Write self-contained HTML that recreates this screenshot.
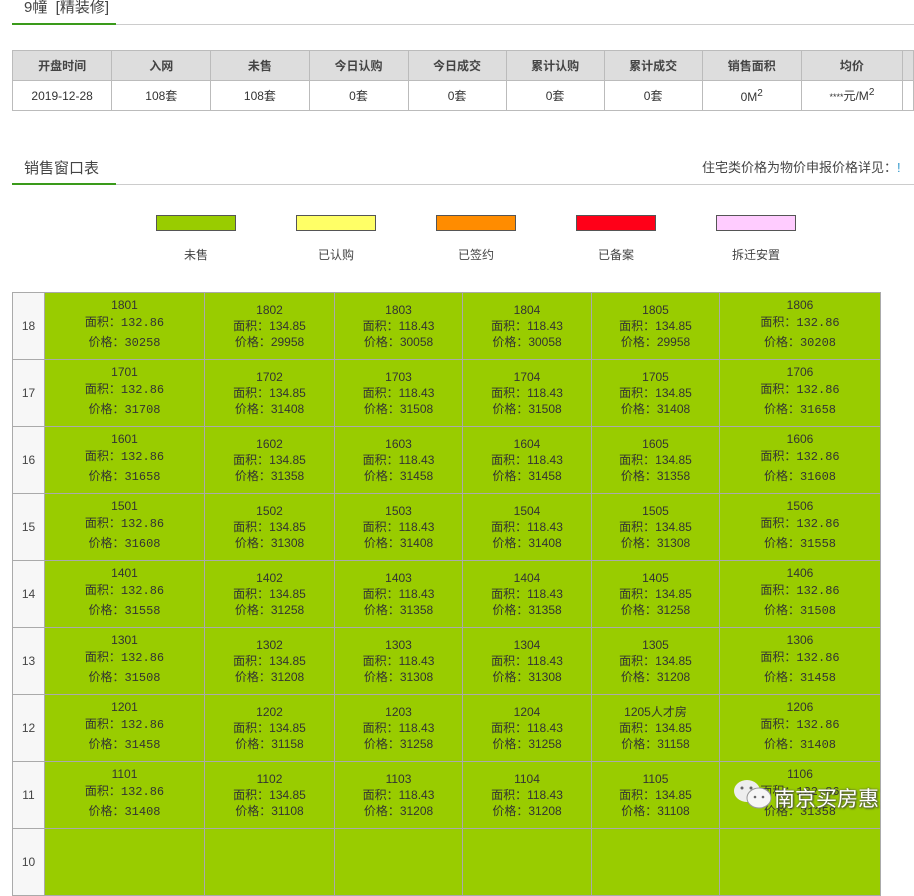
<!DOCTYPE html><html><head><meta charset="utf-8"><style>
body{margin:0;width:914px;height:836px;overflow:hidden;background:#fff;font-family:"Liberation Sans","Noto Sans CJK SC",sans-serif;color:#333;position:relative}
.abs{position:absolute}
.tt{font-size:15px;color:#444}
table.info{position:absolute;left:12px;top:50px;border-collapse:collapse;font-size:12px}
table.info td{border:1px solid #bbb;text-align:center;height:29px;padding:0}
table.info tr.h td{background:#ddd;font-weight:bold;color:#444}
.box{position:absolute;top:215px;width:78px;height:14px;border:1px solid #555}
.lab{position:absolute;top:246px;font-size:12px;width:80px;text-align:center;color:#444}
.grid{position:absolute;left:12px;top:292px;border-collapse:collapse;font-size:12px}
.grid td{border:1px solid #aaa;height:66px;padding:0;vertical-align:top;text-align:center;background:#99cc00;color:#333}
.grid td.n{background:#f7f7f7;vertical-align:middle;width:31px;color:#444}
.a div{height:20px;line-height:20px}.a div:first-child{margin-top:4px;height:16px;line-height:16px}
.a div+div{font-family:"Liberation Mono","Noto Sans CJK SC",monospace;font-size:12px}
.b div{height:16px;line-height:16px}.b div:first-child{margin-top:9px}
</style></head><body>
<div class="abs tt" style="left:24px;top:-4px;font-size:15px">9幢&nbsp;&nbsp;[精装修]</div>
<div class="abs" style="left:12px;top:24px;width:902px;height:1px;background:#ccc"></div>
<div class="abs" style="left:12px;top:23px;width:104px;height:2px;background:#3a9a1a"></div>
<table class="info"><tr class="h"><td style="width:99px">开盘时间</td><td style="width:99px">入网</td><td style="width:98px">未售</td><td style="width:99px">今日认购</td><td style="width:98px">今日成交</td><td style="width:98px">累计认购</td><td style="width:98px">累计成交</td><td style="width:99px">销售面积</td><td style="width:101px">均价</td><td style="width:10px"></td></tr>
<tr><td>2019-12-28</td><td>108套</td><td>108套</td><td>0套</td><td>0套</td><td>0套</td><td>0套</td><td>0M<sup>2</sup></td><td><span style="font-size:9px">****</span>元/M<sup>2</sup></td><td></td></tr></table>
<div class="abs tt" style="left:24px;top:157px">销售窗口表</div>
<div class="abs" style="left:702px;top:157px;font-size:13px;color:#444;white-space:nowrap">住宅类价格为物价申报价格详见：<span style="color:#39c">!</span></div>
<div class="abs" style="left:12px;top:184px;width:902px;height:1px;background:#ccc"></div>
<div class="abs" style="left:12px;top:183px;width:104px;height:2px;background:#3a9a1a"></div>
<div class="box" style="left:156px;background:#99cc00"></div><div class="lab" style="left:156px">未售</div>
<div class="box" style="left:296px;background:#ffff66"></div><div class="lab" style="left:296px">已认购</div>
<div class="box" style="left:436px;background:#ff8c00"></div><div class="lab" style="left:436px">已签约</div>
<div class="box" style="left:576px;background:#ff0018"></div><div class="lab" style="left:576px">已备案</div>
<div class="box" style="left:716px;background:#ffccff"></div><div class="lab" style="left:716px">拆迁安置</div>
<table class="grid">
<tr><td class="n">18</td><td class="a" style="width:159px"><div>1801</div><div>面积：132.86</div><div>价格：30258</div></td><td class="b" style="width:129px"><div>1802</div><div>面积：134.85</div><div>价格：29958</div></td><td class="b" style="width:127px"><div>1803</div><div>面积：118.43</div><div>价格：30058</div></td><td class="b" style="width:128px"><div>1804</div><div>面积：118.43</div><div>价格：30058</div></td><td class="b" style="width:127px"><div>1805</div><div>面积：134.85</div><div>价格：29958</div></td><td class="a" style="width:160px"><div>1806</div><div>面积：132.86</div><div>价格：30208</div></td></tr>
<tr><td class="n">17</td><td class="a"><div>1701</div><div>面积：132.86</div><div>价格：31708</div></td><td class="b"><div>1702</div><div>面积：134.85</div><div>价格：31408</div></td><td class="b"><div>1703</div><div>面积：118.43</div><div>价格：31508</div></td><td class="b"><div>1704</div><div>面积：118.43</div><div>价格：31508</div></td><td class="b"><div>1705</div><div>面积：134.85</div><div>价格：31408</div></td><td class="a"><div>1706</div><div>面积：132.86</div><div>价格：31658</div></td></tr>
<tr><td class="n">16</td><td class="a"><div>1601</div><div>面积：132.86</div><div>价格：31658</div></td><td class="b"><div>1602</div><div>面积：134.85</div><div>价格：31358</div></td><td class="b"><div>1603</div><div>面积：118.43</div><div>价格：31458</div></td><td class="b"><div>1604</div><div>面积：118.43</div><div>价格：31458</div></td><td class="b"><div>1605</div><div>面积：134.85</div><div>价格：31358</div></td><td class="a"><div>1606</div><div>面积：132.86</div><div>价格：31608</div></td></tr>
<tr><td class="n">15</td><td class="a"><div>1501</div><div>面积：132.86</div><div>价格：31608</div></td><td class="b"><div>1502</div><div>面积：134.85</div><div>价格：31308</div></td><td class="b"><div>1503</div><div>面积：118.43</div><div>价格：31408</div></td><td class="b"><div>1504</div><div>面积：118.43</div><div>价格：31408</div></td><td class="b"><div>1505</div><div>面积：134.85</div><div>价格：31308</div></td><td class="a"><div>1506</div><div>面积：132.86</div><div>价格：31558</div></td></tr>
<tr><td class="n">14</td><td class="a"><div>1401</div><div>面积：132.86</div><div>价格：31558</div></td><td class="b"><div>1402</div><div>面积：134.85</div><div>价格：31258</div></td><td class="b"><div>1403</div><div>面积：118.43</div><div>价格：31358</div></td><td class="b"><div>1404</div><div>面积：118.43</div><div>价格：31358</div></td><td class="b"><div>1405</div><div>面积：134.85</div><div>价格：31258</div></td><td class="a"><div>1406</div><div>面积：132.86</div><div>价格：31508</div></td></tr>
<tr><td class="n">13</td><td class="a"><div>1301</div><div>面积：132.86</div><div>价格：31508</div></td><td class="b"><div>1302</div><div>面积：134.85</div><div>价格：31208</div></td><td class="b"><div>1303</div><div>面积：118.43</div><div>价格：31308</div></td><td class="b"><div>1304</div><div>面积：118.43</div><div>价格：31308</div></td><td class="b"><div>1305</div><div>面积：134.85</div><div>价格：31208</div></td><td class="a"><div>1306</div><div>面积：132.86</div><div>价格：31458</div></td></tr>
<tr><td class="n">12</td><td class="a"><div>1201</div><div>面积：132.86</div><div>价格：31458</div></td><td class="b"><div>1202</div><div>面积：134.85</div><div>价格：31158</div></td><td class="b"><div>1203</div><div>面积：118.43</div><div>价格：31258</div></td><td class="b"><div>1204</div><div>面积：118.43</div><div>价格：31258</div></td><td class="b"><div>1205人才房</div><div>面积：134.85</div><div>价格：31158</div></td><td class="a"><div>1206</div><div>面积：132.86</div><div>价格：31408</div></td></tr>
<tr><td class="n">11</td><td class="a"><div>1101</div><div>面积：132.86</div><div>价格：31408</div></td><td class="b"><div>1102</div><div>面积：134.85</div><div>价格：31108</div></td><td class="b"><div>1103</div><div>面积：118.43</div><div>价格：31208</div></td><td class="b"><div>1104</div><div>面积：118.43</div><div>价格：31208</div></td><td class="b"><div>1105</div><div>面积：134.85</div><div>价格：31108</div></td><td class="a"><div>1106</div><div>面积：132.86</div><div>价格：31358</div></td></tr>
<tr><td class="n">10</td><td class="a"></td><td class="b"></td><td class="b"></td><td class="b"></td><td class="b"></td><td class="a"></td></tr>
</table>
<svg class="abs" style="left:733px;top:778px" width="44" height="34"><ellipse cx="14" cy="13" rx="13" ry="11" fill="#eee"/><ellipse cx="26" cy="20" rx="12" ry="10" fill="#f6f6f6" stroke="#999" stroke-width="1"/><circle cx="9" cy="10" r="1.5" fill="#666"/><circle cx="18" cy="10" r="1.5" fill="#666"/><circle cx="22" cy="19" r="1.3" fill="#666"/><circle cx="30" cy="19" r="1.3" fill="#666"/></svg>
<div class="abs" style="left:774px;top:783px;font-size:21px;color:#fff;text-shadow:0 0 2px #555,1px 1px 2px #333;white-space:nowrap">南京买房惠</div>
</body></html>
